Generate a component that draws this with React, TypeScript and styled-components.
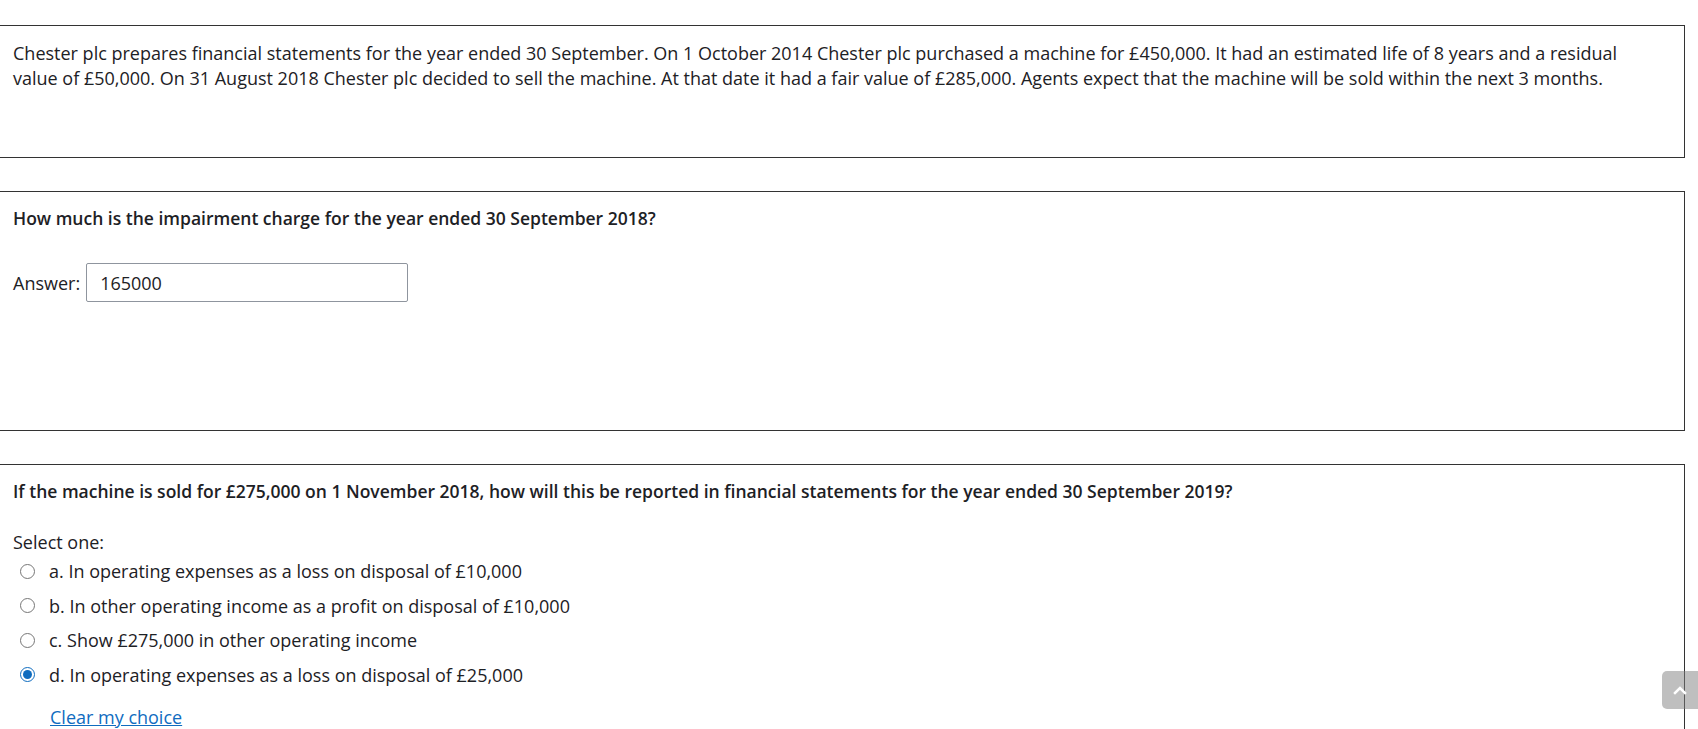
import React from "react";
import styled, { createGlobalStyle } from "styled-components";

const Global = createGlobalStyle`
  html, body { margin: 0; padding: 0; background: #fff; overflow: hidden; }
  body {
    font-family: "Open Sans", "Noto Sans", sans-serif;
    color: #1d2125;
    font-size: 18px;
    line-height: 24px;
  }
`;

const Page = styled.div`
  display: flex;
  flex-direction: column;
  gap: 33px;
  padding-top: 25px;
  margin-left: -1px;
  width: 1686px;
`;

const Card = styled.section<{ $minH: number; $pt: number }>`
  box-sizing: border-box;
  border: 1px solid #333;
  min-height: ${(p) => p.$minH}px;
  padding: ${(p) => p.$pt}px 40px 12px 13px;
`;

const Para = styled.p`
  margin: 0;
  line-height: 24.5px;
`;

const Question = styled.p`
  margin: 0;
  font-weight: 600;
  font-size: 17.5px;
`;

const AnswerRow = styled.div`
  display: flex;
  align-items: center;
  gap: 6px;
  margin-top: 33px;
`;

const AnswerInput = styled.input`
  box-sizing: border-box;
  width: 322px;
  height: 39px;
  border: 1px solid #8f959e;
  border-radius: 2px;
  padding: 0 13px;
  font: inherit;
  color: #1d2125;
  background: #fff;
  outline: none;
`;

const Prompt = styled.div`
  margin-top: 27px;
`;

const Options = styled.div`
  display: flex;
  flex-direction: column;
  gap: 10.6px;
  margin-top: 5px;
`;

const Option = styled.label`
  display: flex;
  align-items: center;
  gap: 14px;
  padding-left: 7px;
  cursor: pointer;
`;

const Radio = styled.input`
  margin: 0;
  width: 15px;
  height: 15px;
  accent-color: #0f6cbf;
`;

const ClearLink = styled.a`
  display: inline-block;
  margin: 18.5px 0 0 37px;
  color: #0f6cbf;
  text-decoration: underline;
`;

const ScrollTop = styled.button`
  position: fixed;
  right: 0;
  top: 671px;
  width: 36px;
  height: 38px;
  border: none;
  border-radius: 5px 0 0 5px;
  background: rgba(128, 128, 128, 0.5);
  display: flex;
  align-items: center;
  justify-content: center;
  padding: 0;
  cursor: pointer;
`;

const options = [
  "a. In operating expenses as a loss on disposal of £10,000",
  "b. In other operating income as a profit on disposal of £10,000",
  "c. Show £275,000 in other operating income",
  "d. In operating expenses as a loss on disposal of £25,000",
];

export default function App() {
  return (
    <>
      <Global />
      <Page>
        <Card $minH={133} $pt={15}>
          <Para>
            Chester plc prepares financial statements for the year ended 30 September. On 1 October 2014 Chester plc
            purchased a machine for £450,000. It had an estimated life of 8 years and a residual value of £50,000. On 31
            August 2018 Chester plc decided to sell the machine. At that date it had a fair value of £285,000. Agents
            expect that the machine will be sold within the next 3 months.
          </Para>
        </Card>
        <Card $minH={240} $pt={14}>
          <Question>How much is the impairment charge for the year ended 30 September 2018?</Question>
          <AnswerRow>
            <span>Answer:</span>
            <AnswerInput defaultValue="165000" />
          </AnswerRow>
        </Card>
        <Card $minH={300} $pt={14}>
          <Question>
            If the machine is sold for £275,000 on 1 November 2018, how will this be reported in financial statements
            for the year ended 30 September 2019?
          </Question>
          <Prompt>Select one:</Prompt>
          <Options>
            {options.map((o, i) => (
              <Option key={i}>
                <Radio type="radio" name="q3" defaultChecked={i === 3} />
                <span>{o}</span>
              </Option>
            ))}
          </Options>
          <ClearLink href="#">Clear my choice</ClearLink>
        </Card>
      </Page>
      <ScrollTop aria-label="Back to top">
        <svg width="14" height="10" viewBox="0 0 14 10" fill="none">
          <path d="M2 8 L7 3 L12 8" stroke="#fff" strokeWidth="2.5" strokeLinecap="square" />
        </svg>
      </ScrollTop>
    </>
  );
}
